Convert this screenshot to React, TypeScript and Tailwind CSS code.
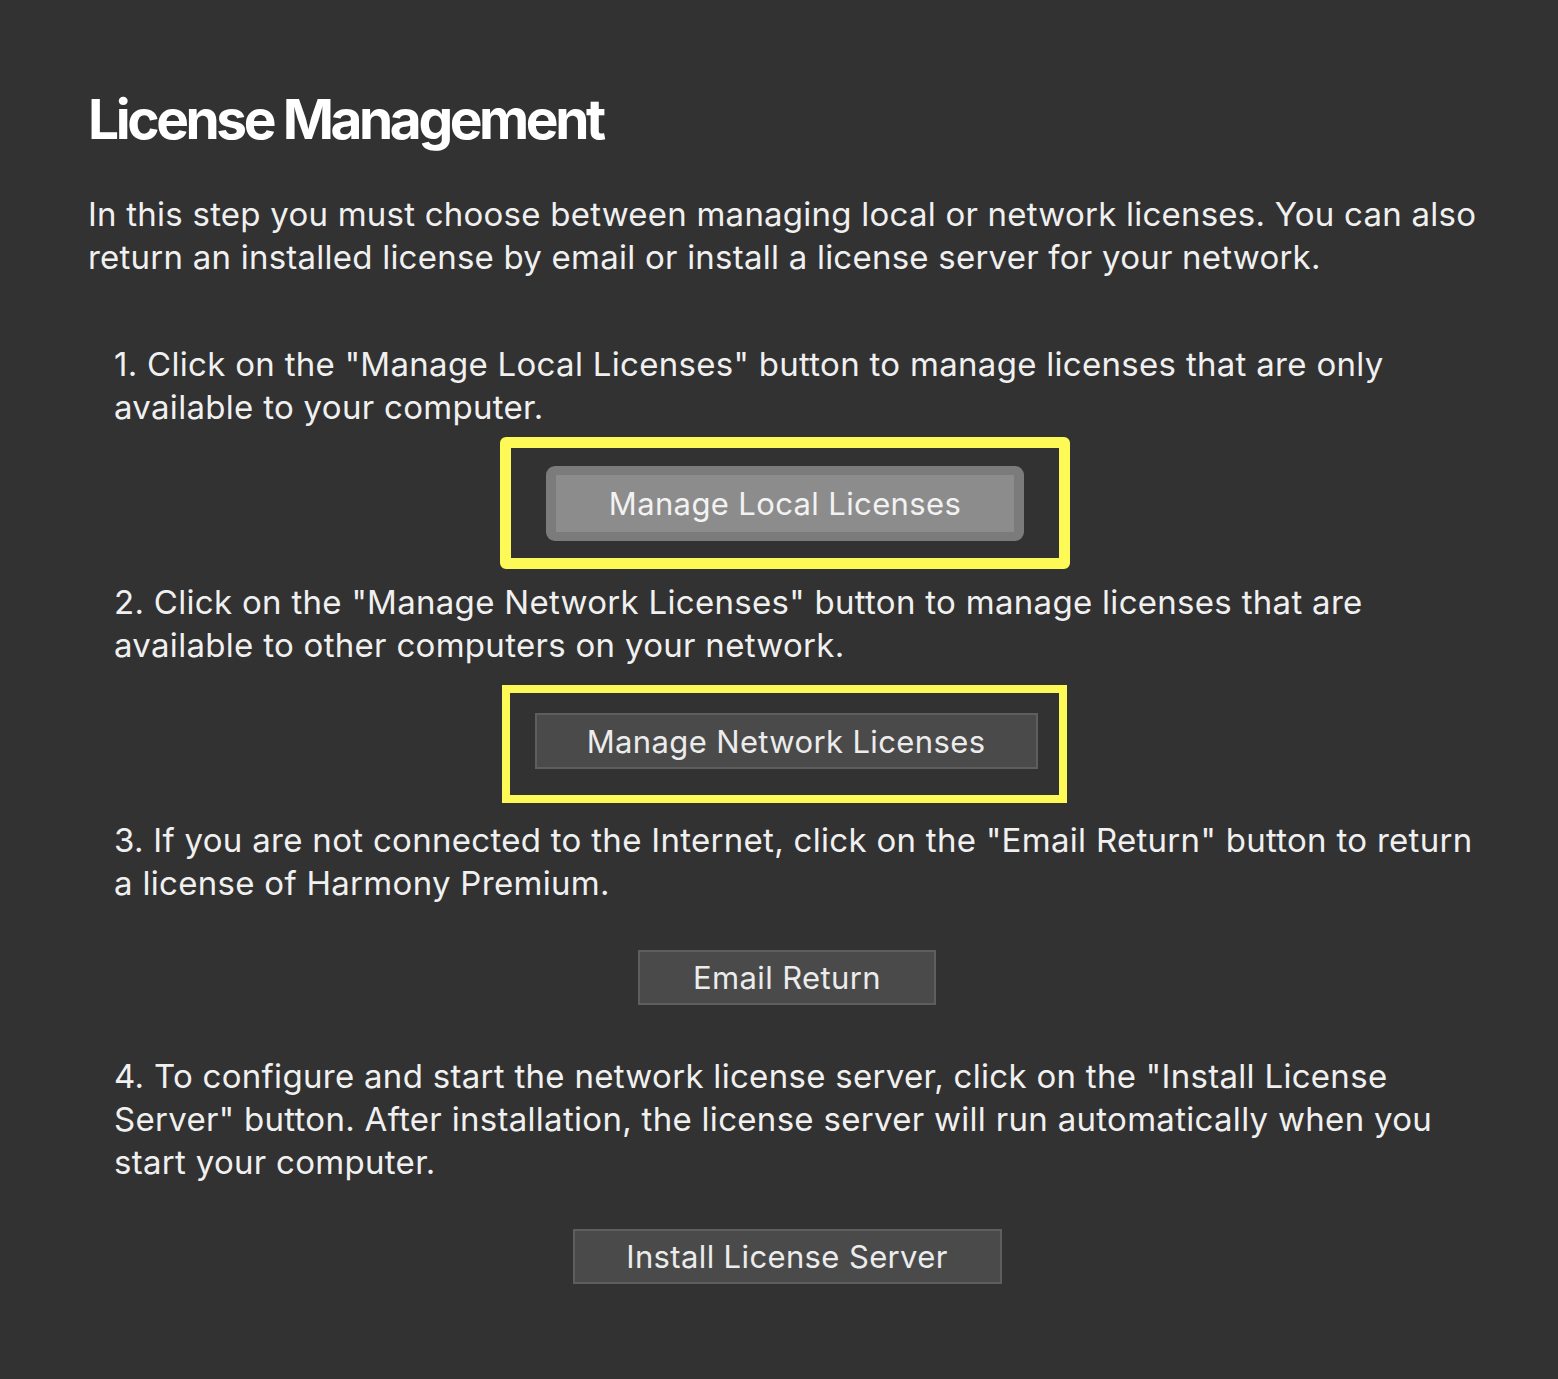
import React from "react";

function PlainButton({ label, w }: { label: string; w: string }) {
  return (
    <div
      className={`${w} h-[55px] flex items-center justify-center border-2 border-[#5e5e5e] bg-[#4a4a4a] text-[31px] tracking-[0.012em] text-[#ececec] leading-none`}
    >
      {label}
    </div>
  );
}

export default function App() {
  return (
    <div className="min-h-screen w-full bg-[#323232] font-['Inter','Noto_Sans',sans-serif] text-[#f0f0f0]">
      <div className="pl-[88px] pt-[90px] pb-[95px]">
        <h1 className="text-[55px] leading-none font-bold tracking-[-0.062em] text-white h-[58px] pt-[2px]">
          License Management
        </h1>
        <p className="mt-[45px] text-[33px] leading-[43px] tracking-[0.007em] whitespace-nowrap">
          In this step you must choose between managing local or network licenses. You can also
          <br />
          return an installed license by email or install a license server for your network.
        </p>

        <div className="pl-[26px] w-[1372px] mt-[64px] text-[33px] leading-[43px] tracking-[0.009em]">
          <p className="whitespace-nowrap">
            1. Click on the "Manage Local Licenses" button to manage licenses that are only
            <br />
            available to your computer.
          </p>
          <div className="flex justify-center mt-[8px]">
            <div className="w-[570px] h-[132px] border-[11px] border-[#fdf957] rounded-[6px] flex items-center justify-center ml-[-4px]">
              <div className="w-[478px] h-[75px] rounded-[9px] bg-[#7b7b7b] p-[9px_10px] flex">
                <div className="flex-1 bg-[#8c8c8c] flex items-center justify-center text-[31px] tracking-[0.012em] leading-none text-[#f2f2f2]">
                  Manage Local Licenses
                </div>
              </div>
            </div>
          </div>

          <p className="mt-[12px] whitespace-nowrap">
            2. Click on the "Manage Network Licenses" button to manage licenses that are
            <br />
            available to other computers on your network.
          </p>
          <div className="flex justify-center mt-[18px]">
            <div className="w-[565px] h-[118px] border-[8px] border-[#fdf957] flex items-center justify-center ml-[-6px]">
              <div className="w-[503px] h-[56px] flex items-center justify-center border-2 border-[#5e5e5e] bg-[#4a4a4a] text-[31px] tracking-[0.012em] text-[#ececec] leading-none ml-[4px] mb-[6px]">
                Manage Network Licenses
              </div>
            </div>
          </div>

          <p className="mt-[16px] whitespace-nowrap">
            3. If you are not connected to the Internet, click on the "Email Return" button to return
            <br />
            a license of Harmony Premium.
          </p>
          <div className="flex justify-center mt-[45px]">
            <PlainButton label="Email Return" w="w-[298px]" />
          </div>

          <p className="mt-[50px] whitespace-nowrap">
            4. To configure and start the network license server, click on the "Install License
            <br />
            Server" button. After installation, the license server will run automatically when you
            <br />
            start your computer.
          </p>
          <div className="flex justify-center mt-[45px]">
            <PlainButton label="Install License Server" w="w-[429px]" />
          </div>
        </div>
      </div>
    </div>
  );
}
